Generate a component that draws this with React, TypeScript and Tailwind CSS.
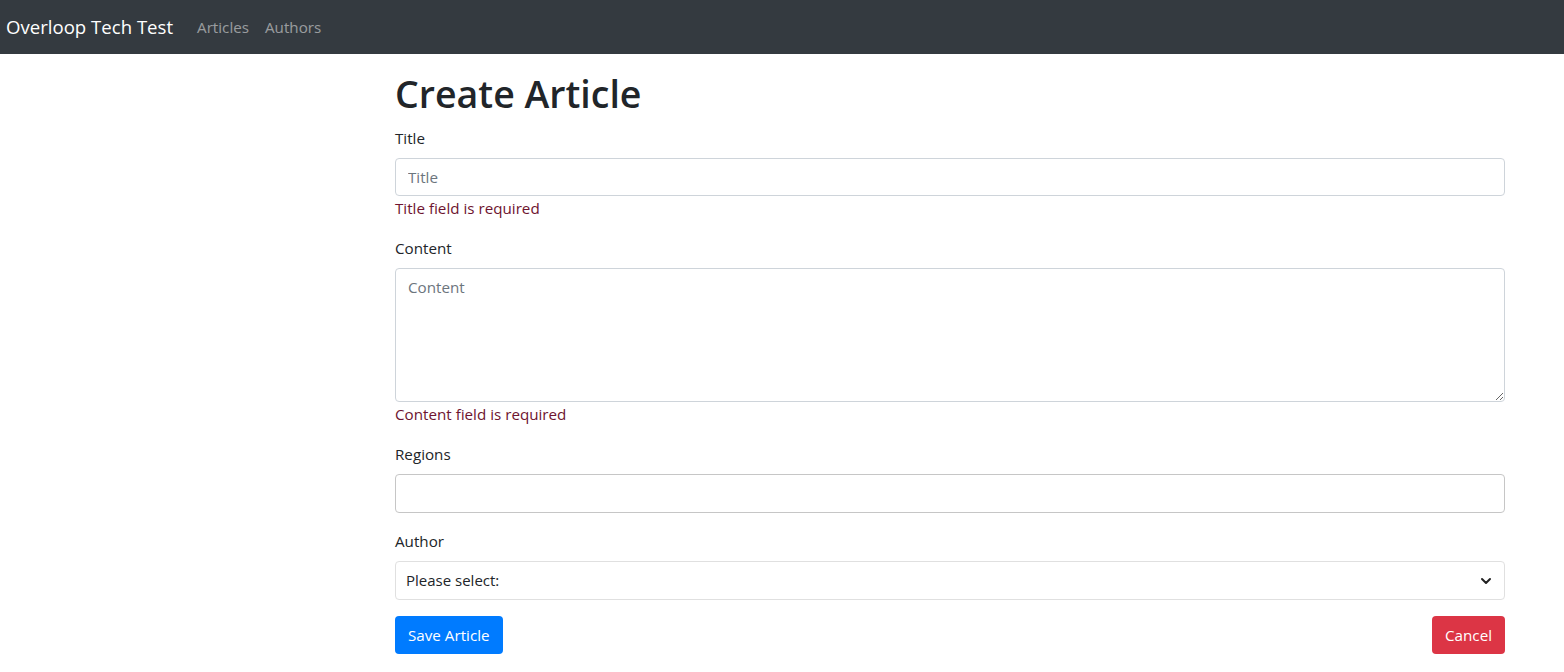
import { ChevronDown } from "lucide-react";

const font = { fontFamily: '"Segoe UI", "Open Sans", "Noto Sans", sans-serif' };

function Label({ children }: { children: React.ReactNode }) {
  return <label className="block mb-2 text-[15.2px] leading-6 text-[#212529]">{children}</label>;
}

function ErrorText({ children }: { children: React.ReactNode }) {
  return <div className="text-[15.2px] leading-6 text-[#6e1430]">{children}</div>;
}

export default function App() {
  return (
    <div className="min-h-[672px] bg-white" style={font}>
      <nav className="flex items-center h-[54px] bg-[#343a40] pl-[6px]">
        <span className="text-[18.6px] text-white mr-4 leading-[30px]">Overloop Tech Test</span>
        <a className="px-2 text-[15.2px] text-white/50">Articles</a>
        <a className="px-2 text-[15.2px] text-white/50">Authors</a>
      </nav>

      <div className="ml-[395px] w-[1110px] text-[#212529]">
        <h1 className="mt-4 mb-2 text-[37.5px] leading-[48px] font-semibold">Create Article</h1>

        <div className="mb-4">
          <Label>Title</Label>
          <input
            placeholder="Title"
            className="block w-full h-[38px] px-3 rounded border border-[#ced4da] text-[15.2px] placeholder:text-[#6c757d] outline-none"
          />
          <ErrorText>Title field is required</ErrorText>
        </div>

        <div className="mb-4">
          <Label>Content</Label>
          <textarea
            placeholder="Content"
            className="block w-full h-[134px] px-3 py-[6px] rounded border border-[#ced4da] text-[15.2px] leading-6 placeholder:text-[#6c757d] outline-none"
          />
          <ErrorText>Content field is required</ErrorText>
        </div>

        <div className="mb-4">
          <Label>Regions</Label>
          <div className="h-[39px] w-full rounded border border-[#c6c6c6]" />
        </div>

        <div className="mb-4">
          <Label>Author</Label>
          <div className="flex items-center justify-between h-[39px] w-full rounded border border-[#e0e0e0] pl-[10px] pr-[10px] text-[15px]">
            <span>Please select:</span>
            <ChevronDown className="w-4 h-4 text-[#222]" strokeWidth={3} />
          </div>
        </div>

        <div className="flex justify-between">
          <button className="h-[38px] px-[13px] rounded bg-[#007bff] text-white text-[15.2px]">Save Article</button>
          <button className="h-[38px] px-[13px] rounded bg-[#dc3545] text-white text-[15.2px]">Cancel</button>
        </div>
      </div>
    </div>
  );
}
